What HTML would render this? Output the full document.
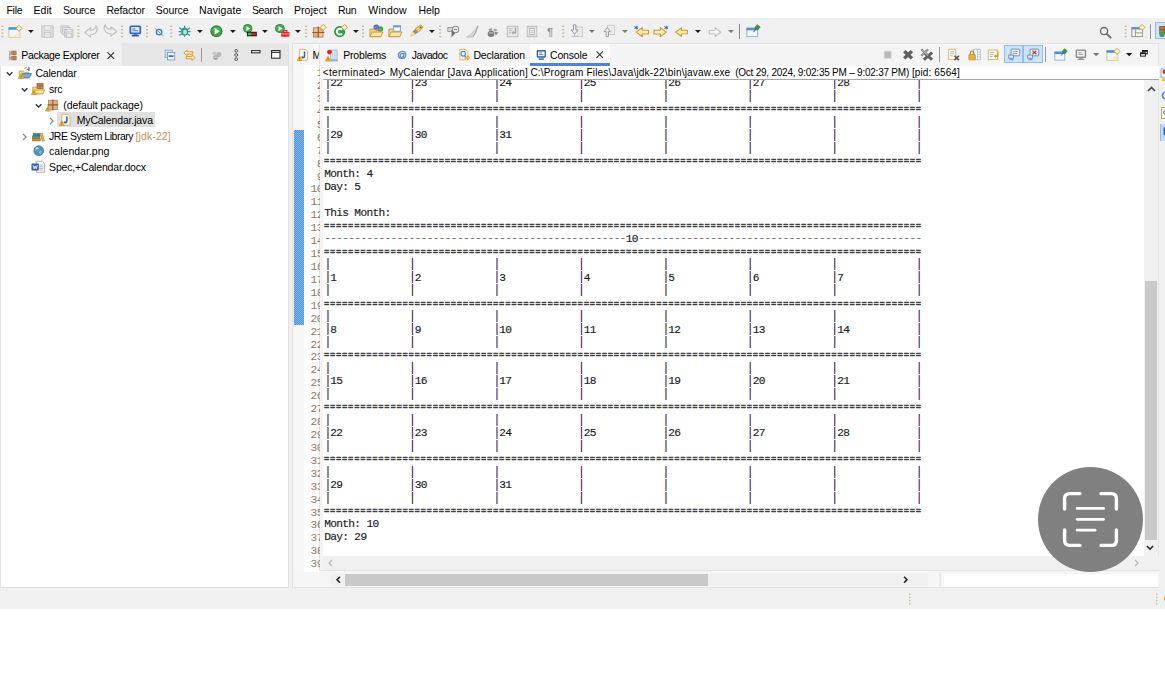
<!DOCTYPE html>
<html lang="en"><head><meta charset="utf-8"><title>Eclipse - MyCalendar Console</title>
<style>
html,body{margin:0;padding:0;}
body{width:1165px;height:692px;position:relative;overflow:hidden;background:#fff;font-family:"Liberation Sans", sans-serif;}
.r{position:absolute;}
.t{position:absolute;white-space:pre;line-height:14px;height:14px;}
.i{position:absolute;overflow:visible;}
#con{position:absolute;left:322.5px;top:80.1px;width:822px;height:475.6px;overflow:hidden;}
#con pre{margin:0;position:absolute;left:1.7px;top:-3.0px;font-family:"Liberation Mono", monospace;font-size:11.2px;line-height:12.967px;color:#1a1a1a;letter-spacing:-0.6811px;-webkit-text-stroke:0.15px #1a1a1a;}
#con b{position:relative;top:-1.0px;line-height:0;font-size:8px;letter-spacing:1.239px;color:#3d3d3d;-webkit-text-stroke:0.6px #3d3d3d;}
#con i{font-style:normal;-webkit-text-stroke:0;color:#34103f;font-size:12.3px;letter-spacing:-1.341px;line-height:0;position:relative;top:-0.4px;}
#con u{position:relative;top:-0.6px;text-decoration:none;color:#686868;-webkit-text-stroke:0;}
#ln{position:absolute;left:304px;top:65px;width:15.5px;height:506.5px;overflow:hidden;}
#ln pre{margin:0;position:absolute;right:-3.2px;top:2.2px;text-align:right;font-family:"Liberation Mono", monospace;font-size:11.2px;letter-spacing:-0.681px;line-height:12.927px;color:#8a786a;}
</style></head><body>
<div class="r" style="left:0px;top:0px;width:1165px;height:17.5px;background:#fff;"></div>
<div class="r" style="left:0px;top:17.5px;width:1165px;height:26px;background:#f0f0f0;"></div>
<div class="r" style="left:0px;top:43.5px;width:1165px;height:565px;background:#f0f0f0;"></div>
<div class="r" style="left:0px;top:43px;width:288.5px;height:22.8px;background:#e6e6e6;"></div>
<div class="r" style="left:0px;top:43px;width:122.3px;height:22.8px;background:#f1f1f1;"></div>
<div class="r" style="left:0px;top:65.8px;width:288.5px;height:521.2px;background:#fff;"></div>
<div class="r" style="left:288px;top:43.5px;width:1px;height:543.5px;background:#e0e0e0;"></div>
<div class="r" style="left:0px;top:586.5px;width:289px;height:1px;background:#e0e0e0;"></div>
<div class="r" style="left:0px;top:65.8px;width:1px;height:521px;background:#e2e2e2;"></div>
<div class="r" style="left:293px;top:43.5px;width:866px;height:543.5px;background:#f5f5f5;box-shadow:0 0 0 1px #e2e2e2;"></div>
<div class="r" style="left:293.5px;top:65px;width:10.5px;height:506.5px;background:#f7f7f7;"></div>
<div class="r" style="left:304px;top:65px;width:16px;height:506.5px;background:#fff;"></div>
<div class="r" style="left:293.5px;top:130px;width:10.5px;height:195px;background:#5a9ee0;background-image:repeating-conic-gradient(#4f97dd 0 25%, #7db5ea 0 50%);background-size:2px 2px;"></div>
<div class="r" style="left:331px;top:573.8px;width:610px;height:12.6px;background:#f0f0f0;"></div>
<div class="r" style="left:345.2px;top:574.3px;width:363px;height:11.4px;background:#c9c9c9;"></div>
<div class="r" style="left:928px;top:573.8px;width:11px;height:13px;background:#f6f6f6;"></div>
<div class="r" style="left:940px;top:573px;width:1px;height:14px;background:#e9e9e9;"></div>
<div class="r" style="left:944.3px;top:573.8px;width:213.5px;height:13px;background:#fff;"></div>
<div class="r" style="left:319.5px;top:43.6px;width:838.3px;height:526.4px;background:#f4f4f4;box-shadow:0 0 0 1px #e4e4e4;"></div>
<div class="r" style="left:530px;top:43.9px;width:80px;height:20px;background:#fff;"></div>
<div class="r" style="left:530px;top:63px;width:80px;height:2.6px;background:#4f83dc;"></div>
<div class="r" style="left:322.5px;top:65.6px;width:836px;height:13px;background:#fff;"></div>
<div class="r" style="left:322.5px;top:78.5px;width:836px;height:1.6px;background:#a6a6a6;"></div>
<div class="r" style="left:322.5px;top:80.1px;width:822px;height:475.6px;background:#fff;"></div>
<div class="r" style="left:1144.3px;top:80.1px;width:14px;height:475.6px;background:#f0f0f0;"></div>
<div class="r" style="left:1144.8px;top:280.6px;width:12.4px;height:259.4px;background:#c9c9c9;"></div>
<div class="r" style="left:322.5px;top:555.7px;width:836px;height:14px;background:#f0f0f0;"></div>
<div class="r" style="left:1159px;top:43.5px;width:6px;height:544px;background:#f1f1f1;"></div>
<div class="r" style="left:1159.6px;top:124px;width:6px;height:16.8px;background:#c4ddf5;box-shadow:inset 1px 0 0 #8fbdee;"></div>
<div class="r" style="left:1154.8px;top:21.7px;width:11px;height:17.6px;background:#cfe4f8;box-shadow:inset 0 0 0 1px #8fbdee;"></div>
<div class="r" style="left:1004px;top:45.2px;width:19.2px;height:18px;background:#cde3f8;box-shadow:inset 0 0 0 1px #8fbdee;"></div>
<div class="r" style="left:1023.2px;top:45.2px;width:19.4px;height:18px;background:#cde3f8;box-shadow:inset 0 0 0 1px #8fbdee;"></div>
<div class="r" style="left:739.2px;top:23.7px;width:1.3px;height:15px;background:#8a8a8a;"></div>
<div class="r" style="left:1150px;top:23.5px;width:1.2px;height:15px;background:#9a9a9a;"></div>
<div class="r" style="left:939.3px;top:47px;width:1.2px;height:14.5px;background:#9a9a9a;"></div>
<div class="r" style="left:1044.8px;top:47px;width:1.2px;height:14.5px;background:#9a9a9a;"></div>
<div class="r" style="left:201.2px;top:47.5px;width:1.2px;height:14px;background:#9a9a9a;"></div>
<div class="r" style="left:57.2px;top:112.4px;width:97.4px;height:15.1px;background:#dfdfdf;"></div>
<div class="r" style="left:0px;top:608.5px;width:1165px;height:83.5px;background:#fff;"></div>
<span class="t" id="t0" style="left:6.40px;top:3.20px;font-size:10.5px;color:#000;letter-spacing:-0.230px;">File</span>
<span class="t" id="t1" style="left:33.40px;top:3.20px;font-size:10.5px;color:#000;letter-spacing:0.073px;">Edit</span>
<span class="t" id="t2" style="left:63.10px;top:3.20px;font-size:10.5px;color:#000;letter-spacing:-0.228px;">Source</span>
<span class="t" id="t3" style="left:106.40px;top:3.20px;font-size:10.5px;color:#000;letter-spacing:-0.148px;">Refactor</span>
<span class="t" id="t4" style="left:155.80px;top:3.20px;font-size:10.5px;color:#000;letter-spacing:-0.113px;">Source</span>
<span class="t" id="t5" style="left:199.10px;top:3.20px;font-size:10.5px;color:#000;letter-spacing:0.106px;">Navigate</span>
<span class="t" id="t6" style="left:252.00px;top:3.20px;font-size:10.5px;color:#000;letter-spacing:-0.413px;">Search</span>
<span class="t" id="t7" style="left:294.10px;top:3.20px;font-size:10.5px;color:#000;letter-spacing:0.002px;">Project</span>
<span class="t" id="t8" style="left:338.10px;top:3.20px;font-size:10.5px;color:#000;letter-spacing:-0.422px;">Run</span>
<span class="t" id="t9" style="left:368.30px;top:3.20px;font-size:10.5px;color:#000;letter-spacing:0.175px;">Window</span>
<span class="t" id="t10" style="left:418.40px;top:3.20px;font-size:10.5px;color:#000;letter-spacing:-0.027px;">Help</span>
<span class="t" id="t11" style="left:21.30px;top:48.30px;font-size:10.5px;color:#000;letter-spacing:-0.299px;">Package Explorer</span>
<span class="t" id="t12" style="left:35.40px;top:66.40px;font-size:10.5px;color:#000;letter-spacing:-0.176px;">Calendar</span>
<span class="t" id="t13" style="left:49.10px;top:81.98px;font-size:10.5px;color:#000;letter-spacing:-0.302px;">src</span>
<span class="t" id="t14" style="left:63.30px;top:97.56px;font-size:10.5px;color:#000;letter-spacing:-0.097px;">(default package)</span>
<span class="t" id="t15" style="left:76.70px;top:113.14px;font-size:10.5px;color:#000;letter-spacing:-0.134px;">MyCalendar.java</span>
<span class="t" id="t16" style="left:49.10px;top:128.72px;font-size:10.5px;color:#000;letter-spacing:-0.493px;">JRE System Library</span>
<span class="t" id="t17" style="left:135.40px;top:128.72px;font-size:10.5px;color:#b09a5e;letter-spacing:0.133px;">[jdk-22]</span>
<span class="t" id="t18" style="left:49.10px;top:144.30px;font-size:10.5px;color:#000;letter-spacing:0.013px;">calendar.png</span>
<span class="t" id="t19" style="left:49.10px;top:159.88px;font-size:10.5px;color:#000;letter-spacing:-0.175px;">Spec,+Calendar.docx</span>
<span class="t" id="t20" style="left:397.20px;top:47.70px;font-size:9.4px;color:#2f72c4;letter-spacing:0.477px;-webkit-text-stroke:0.25px #2f72c4;">@</span>
<span class="t" id="t21" style="left:343.20px;top:47.80px;font-size:10.5px;color:#000;letter-spacing:-0.183px;">Problems</span>
<span class="t" id="t22" style="left:411.80px;top:47.80px;font-size:10.5px;color:#000;letter-spacing:-0.475px;">Javadoc</span>
<span class="t" id="t23" style="left:473.40px;top:47.80px;font-size:10.5px;color:#000;letter-spacing:-0.147px;">Declaration</span>
<span class="t" id="t24" style="left:550.00px;top:47.80px;font-size:10.5px;color:#000;letter-spacing:-0.162px;">Console</span>
<span class="t" id="t25" style="left:322.80px;top:65.50px;font-size:10px;color:#000;letter-spacing:0.322px;">&lt;terminated&gt;</span>
<span class="t" id="t26" style="left:389.70px;top:65.50px;font-size:10px;color:#000;letter-spacing:0.138px;">MyCalendar</span>
<span class="t" id="t27" style="left:447.40px;top:65.50px;font-size:10px;color:#000;letter-spacing:0.153px;">[Java Application]</span>
<span class="t" id="t28" style="left:530.40px;top:65.50px;font-size:10px;color:#000;letter-spacing:0.196px;">C:\Program Files\Java\jdk-22\bin\javaw.exe</span>
<span class="t" id="t29" style="left:735.20px;top:65.50px;font-size:10px;color:#000;letter-spacing:-0.233px;">(Oct 29, 2024, 9:02:35 PM – 9:02:37 PM)</span>
<span class="t" id="t30" style="left:911.90px;top:65.50px;font-size:10px;color:#000;letter-spacing:0.117px;">[pid: 6564]</span>
<svg class="i" style="left:8.40px;top:24.60px" width="14.00" height="13.40" viewBox="0 0 16 16" preserveAspectRatio="none"><rect x="1" y="3.2" width="12.6" height="11.8" fill="#eef7fe" stroke="#d9c27e" stroke-width="1"/><path d="M5 14.5 L13 8 V14.5 Z" fill="#f6ecc4"/><rect x="0.6" y="2.8" width="13.4" height="2.8" fill="#3f8fdc"/><path d="M12.6 0.4 L16 4 L12.6 7.6 L9.2 4 Z" fill="#fbeec0" stroke="#c9a040" stroke-width="1.1" stroke-linejoin="round"/><path d="M10.6 4 H14.6" stroke="#fffbe8" stroke-width="1"/></svg>
<svg class="i" style="left:28.10px;top:29.82px" width="5.80" height="3.36" viewBox="0 0 7 4" preserveAspectRatio="none"><path d="M0 0 H7 L3.5 3.6 Z" fill="#1a1a1a"/></svg>
<svg class="i" style="left:40.80px;top:25.10px" width="13.00" height="13.00" viewBox="0 0 16 16" preserveAspectRatio="none"><path d="M1 1 H15 V15 H1 Z" fill="#dedede" stroke="#c2c2c2"/><rect x="4" y="1" width="8" height="5.5" fill="#ececec" stroke="#c8c8c8" stroke-width="0.8"/><rect x="4.5" y="9.5" width="7" height="5.5" fill="#ececec" stroke="#bdbdbd" stroke-width="0.8"/><path d="M6 12 H10" stroke="#c8c8c8"/></svg>
<svg class="i" style="left:60.20px;top:25.10px" width="13.80" height="13.00" viewBox="0 0 16 16" preserveAspectRatio="none"><path d="M1 1 H10 V10 H1 Z" fill="#e2e2e2" stroke="#c6c6c6"/><path d="M3 3 H12 V12 H3 Z" fill="#e2e2e2" stroke="#c2c2c2"/><path d="M5.5 5.5 H15 V15 H5.5 Z" fill="#dedede" stroke="#bcbcbc"/><rect x="7.5" y="10.5" width="5.5" height="4.5" fill="#eeeeee" stroke="#bdbdbd" stroke-width="0.8"/><rect x="7.5" y="5.5" width="5.5" height="3" fill="#ececec" stroke="#c8c8c8" stroke-width="0.6"/></svg>
<svg class="i" style="left:84.40px;top:24.90px" width="14.40" height="13.00" viewBox="0 0 16 16" preserveAspectRatio="none"><path d="M0.8 9.2 L7.2 3.4 V6.6 C10.5 6.6 12.8 4.4 13.6 0.8 C16.2 6 13.6 12 7.2 12 V15 Z" fill="#eeeeee" stroke="#c4c4c4" stroke-width="1.4" stroke-linejoin="round"/></svg>
<svg class="i" style="left:103.20px;top:24.00px" width="14.40" height="13.00" viewBox="0 0 16 16" preserveAspectRatio="none"><path d="M0.8 9.2 L7.2 3.4 V6.6 C10.5 6.6 12.8 4.4 13.6 0.8 C16.2 6 13.6 12 7.2 12 V15 Z" fill="#eeeeee" stroke="#c4c4c4" stroke-width="1.4" stroke-linejoin="round" transform="translate(16,0) scale(-1,1)"/></svg>
<svg class="i" style="left:129.00px;top:25.00px" width="12.60" height="12.00" viewBox="0 0 16 16" preserveAspectRatio="none"><rect x="0.6" y="0.6" width="14.8" height="11.6" rx="2" fill="#3568bd"/><rect x="2.8" y="2.8" width="10.4" height="7.2" fill="#e4eefb"/><path d="M4.4 5.4 H8.4 M4.4 7.6 H11.4" stroke="#4a7fc9" stroke-width="1.3"/><path d="M5.5 12.2 H10.5 V13.4 H12.6 V15.2 H3.4 V13.4 H5.5 Z" fill="#2f5fb0"/></svg>
<svg class="i" style="left:154.40px;top:26.60px" width="10.20" height="10.00" viewBox="0 0 16 16" preserveAspectRatio="none"><circle cx="8" cy="8.2" r="4.3" fill="#d6e8f8" stroke="#2f7fc6" stroke-width="2"/><path d="M1 1.8 L15.5 14.8" stroke="#8a8f98" stroke-width="1.5"/></svg>
<svg class="i" style="left:178.00px;top:25.45px" width="13.20" height="12.50" viewBox="0 0 16 16" preserveAspectRatio="none"><path d="M8 1 V15 M1.5 3.5 L14.5 13.5 M14.5 3.5 L1.5 13.5 M0.8 8.5 H15.2" stroke="#2f8fa0" stroke-width="1.5"/><ellipse cx="8" cy="8.5" rx="4.3" ry="5.2" fill="#379a9a"/><ellipse cx="8.4" cy="9" rx="2.4" ry="3" fill="#bfe6b4"/></svg>
<svg class="i" style="left:197.10px;top:29.82px" width="5.80" height="3.36" viewBox="0 0 7 4" preserveAspectRatio="none"><path d="M0 0 H7 L3.5 3.6 Z" fill="#1a1a1a"/></svg>
<svg class="i" style="left:210.40px;top:24.70px" width="12.80" height="12.60" viewBox="0 0 16 16" preserveAspectRatio="none"><circle cx="8" cy="8" r="7.6" fill="#2a8632"/><circle cx="8" cy="8" r="6.2" fill="#3fa34b"/><path d="M2.5 6 A6 6 0 0 1 13.5 6 Z" fill="#5cb866" opacity="0.7"/><path d="M5.8 3.8 L12.3 8 L5.8 12.2 Z" fill="#fff"/></svg>
<svg class="i" style="left:229.70px;top:29.82px" width="5.80" height="3.36" viewBox="0 0 7 4" preserveAspectRatio="none"><path d="M0 0 H7 L3.5 3.6 Z" fill="#1a1a1a"/></svg>
<svg class="i" style="left:242.50px;top:24.15px" width="13.80" height="13.50" viewBox="0 0 16 16" preserveAspectRatio="none"><circle cx="5.5" cy="5.4" r="5.4" fill="#2f9240"/><circle cx="5.5" cy="5.4" r="4.2" fill="#46a955"/><path d="M3.9 2.6 L8.4 5.4 L3.9 8.2 Z" fill="#fff"/><rect x="4.6" y="9.2" width="11.4" height="5.4" fill="#161616"/><rect x="5.7" y="10.3" width="4.4" height="3.2" fill="#2fc23f"/><rect x="10.3" y="10.3" width="4.6" height="3.2" fill="#e81c1c"/></svg>
<svg class="i" style="left:262.30px;top:29.82px" width="5.80" height="3.36" viewBox="0 0 7 4" preserveAspectRatio="none"><path d="M0 0 H7 L3.5 3.6 Z" fill="#1a1a1a"/></svg>
<svg class="i" style="left:275.20px;top:24.15px" width="14.40" height="13.50" viewBox="0 0 16 16" preserveAspectRatio="none"><circle cx="5.5" cy="5.4" r="5.4" fill="#2f9240"/><circle cx="5.5" cy="5.4" r="4.2" fill="#46a955"/><path d="M3.9 2.6 L8.4 5.4 L3.9 8.2 Z" fill="#fff"/><rect x="6.8" y="9.2" width="9.2" height="6" rx="1" fill="#e3262b"/><path d="M9.6 9.2 V7.8 H13.2 V9.2" stroke="#e3262b" stroke-width="1.3" fill="none"/><path d="M6.8 11.8 H16" stroke="#f9c0c0" stroke-width="0.9"/></svg>
<svg class="i" style="left:295.30px;top:29.82px" width="5.80" height="3.36" viewBox="0 0 7 4" preserveAspectRatio="none"><path d="M0 0 H7 L3.5 3.6 Z" fill="#1a1a1a"/></svg>
<svg class="i" style="left:312.00px;top:24.45px" width="14.20" height="13.50" viewBox="0 0 16 16" preserveAspectRatio="none"><rect x="1.5" y="4.5" width="11" height="11" fill="#ddb086" stroke="#b07a4c" stroke-width="0.9"/><path d="M7 3 V16 M0.3 10 H14" stroke="#94592f" stroke-width="1.3"/><rect x="2.6" y="5.6" width="3.4" height="3.4" fill="#ecc9a4"/><rect x="8.2" y="11.2" width="3.4" height="3.4" fill="#ecc9a4"/><path d="M12.6 0.4 L16 4 L12.6 7.6 L9.2 4 Z" fill="#fbeec0" stroke="#c9a040" stroke-width="1.1" stroke-linejoin="round"/><path d="M10.6 4 H14.6" stroke="#fffbe8" stroke-width="1"/></svg>
<svg class="i" style="left:333.60px;top:24.45px" width="13.40" height="13.50" viewBox="0 0 16 16" preserveAspectRatio="none"><circle cx="6.8" cy="9" r="6.6" fill="#2a8f3e"/><circle cx="6.8" cy="9" r="5.4" fill="#3aa24e"/><path d="M9.6 6.8 A3.5 3.5 0 1 0 9.6 11.4" stroke="#fff" stroke-width="2.3" fill="none"/><path d="M12.6 0.4 L16 4 L12.6 7.6 L9.2 4 Z" fill="#fbeec0" stroke="#c9a040" stroke-width="1.1" stroke-linejoin="round"/><path d="M10.6 4 H14.6" stroke="#fffbe8" stroke-width="1"/></svg>
<svg class="i" style="left:352.60px;top:29.82px" width="5.80" height="3.36" viewBox="0 0 7 4" preserveAspectRatio="none"><path d="M0 0 H7 L3.5 3.6 Z" fill="#1a1a1a"/></svg>
<svg class="i" style="left:368.50px;top:24.15px" width="14.50" height="13.50" viewBox="0 0 16 16" preserveAspectRatio="none"><path d="M1 6 H6 L7.5 7.5 H13 V15 H1 Z" fill="#f3d48b" stroke="#c8922e" stroke-width="1"/><path d="M1 15 L3.5 9.5 H15.5 L13 15 Z" fill="#fbe6a8" stroke="#c8922e" stroke-width="1" stroke-linejoin="round"/><circle cx="8" cy="3.6" r="3.1" fill="#6a5bb5"/><path d="M6.3 3.8 H9.7" stroke="#b9b0e6" stroke-width="0.9"/><circle cx="12.6" cy="5.8" r="3" fill="#3c9a55"/><path d="M11 6 H14.2" stroke="#a9dcb6" stroke-width="0.9"/></svg>
<svg class="i" style="left:388.00px;top:24.15px" width="14.40" height="13.50" viewBox="0 0 16 16" preserveAspectRatio="none"><path d="M1 6 H6 L7.5 7.5 H13 V15 H1 Z" fill="#f3d48b" stroke="#c8922e" stroke-width="1"/><path d="M1 15 L3.5 9.5 H15.5 L13 15 Z" fill="#fbe6a8" stroke="#c8922e" stroke-width="1" stroke-linejoin="round"/><rect x="6" y="2" width="8" height="6.5" fill="#f4f8ff" stroke="#7c9fd6" stroke-width="1"/><rect x="6" y="2" width="8" height="2" fill="#6d97d8"/></svg>
<svg class="i" style="left:409.00px;top:24.15px" width="15.00" height="13.50" viewBox="0 0 16 16" preserveAspectRatio="none"><path d="M1.5 14.5 L4 9 L7 12 Z" fill="#fff2a8" stroke="#e8b93a" stroke-width="0.8"/><path d="M4 9 L7 12 L10 9.5 L6.5 6 Z" fill="#8e8e96"/><path d="M6.5 6 L10 9.5 L15 4 L12.5 1 Z" fill="#f2c868" stroke="#c9922e" stroke-width="0.9"/><circle cx="12.3" cy="4" r="1.1" fill="#7a5a1a"/></svg>
<svg class="i" style="left:429.30px;top:29.82px" width="5.80" height="3.36" viewBox="0 0 7 4" preserveAspectRatio="none"><path d="M0 0 H7 L3.5 3.6 Z" fill="#1a1a1a"/></svg>
<svg class="i" style="left:446.50px;top:24.70px" width="13.00" height="13.00" viewBox="0 0 16 16" preserveAspectRatio="none"><rect x="1" y="3" width="7" height="5" fill="#d6d6d6" stroke="#8e8e8e"/><circle cx="10.5" cy="5.5" r="4" fill="#ececec" stroke="#8a8a8a" stroke-width="1.3"/><path d="M8.5 5.5 H12.5" stroke="#808080" stroke-width="1.2"/><path d="M5.5 6 V15.5 L10 10 Z" fill="#707070"/></svg>
<svg class="i" style="left:466.00px;top:24.70px" width="13.20" height="13.00" viewBox="0 0 16 16" preserveAspectRatio="none"><path d="M1 14.5 H8 C11 12 13 7 14.5 1 C11 6 7 11 1 14.5 Z" fill="#d9d9d9" stroke="#c0c0c0" stroke-width="0.9"/><path d="M8.5 14 C11 11 13 6 14.5 1" stroke="#a8a8a8" stroke-width="1.3" fill="none"/><path d="M0.5 15 H9" stroke="#c6c6c6"/></svg>
<svg class="i" style="left:487.00px;top:27.15px" width="11.80" height="10.50" viewBox="0 0 16 16" preserveAspectRatio="none"><circle cx="5.5" cy="10.5" r="4.6" fill="#7c7c7c"/><circle cx="5" cy="4" r="2.2" fill="#9a9a9a"/><circle cx="11" cy="4.5" r="2.4" fill="#a8a8a8"/><path d="M10 7.5 L15.5 8 L12 13 Z" fill="#8a8a8a"/><path d="M2.5 9 H8.5" stroke="#e6e6e6" stroke-width="1.1"/></svg>
<svg class="i" style="left:505.80px;top:24.70px" width="13.20" height="13.00" viewBox="0 0 16 16" preserveAspectRatio="none"><rect x="1.5" y="1.5" width="13" height="13" fill="#e9e9e9" stroke="#b2b2b2"/><path d="M3.5 4.5 H8 M3.5 7 H7 M3.5 9.5 H6" stroke="#b3b3b3"/><path d="M11.5 3 V9.5 H8.5" stroke="#a8a8a8" stroke-width="1.8" fill="none"/><path d="M9.5 7 L6.5 9.5 L9.5 12 Z" fill="#a8a8a8"/></svg>
<svg class="i" style="left:526.00px;top:24.70px" width="12.00" height="13.00" viewBox="0 0 16 16" preserveAspectRatio="none"><rect x="1.5" y="1.5" width="13" height="13" fill="#e9e9e9" stroke="#b2b2b2"/><rect x="5" y="4.5" width="6" height="7" fill="#f8f8f8" stroke="#a8a8a8"/><path d="M3 3.5 H13 M3 12.5 H13" stroke="#bdbdbd" stroke-dasharray="1 1"/><path d="M6 7 H10 M6 9 H10" stroke="#b0b0b0"/></svg>
<svg class="i" style="left:570.00px;top:24.45px" width="13.50" height="13.50" viewBox="0 0 16 16" preserveAspectRatio="none"><rect x="5.5" y="3.5" width="9" height="11" fill="#f0f0f0" stroke="#c2c2c2"/><path d="M8 6.5 H13 M8 9 H13 M8 11.5 H13" stroke="#cfcfcf" stroke-dasharray="1.2 1"/><path d="M4 1 H7 V7 H9.5 L5.5 12 L1.5 7 H4 Z" fill="#ededed" stroke="#8e8e8e" stroke-width="1"/><path d="M1.5 14.5 H9.5" stroke="#b5b5b5"/></svg>
<svg class="i" style="left:589.40px;top:29.82px" width="5.80" height="3.36" viewBox="0 0 7 4" preserveAspectRatio="none"><path d="M0 0 H7 L3.5 3.6 Z" fill="#7a7a7a"/></svg>
<svg class="i" style="left:603.00px;top:24.45px" width="12.50" height="13.50" viewBox="0 0 16 16" preserveAspectRatio="none"><rect x="5.5" y="1.5" width="9" height="11" fill="#f0f0f0" stroke="#c2c2c2"/><path d="M8 4.5 H13 M8 7 H13 M8 9.5 H13" stroke="#cfcfcf" stroke-dasharray="1.2 1"/><path d="M4 15 H7 V9 H9.5 L5.5 4 L1.5 9 H4 Z" fill="#ededed" stroke="#8e8e8e" stroke-width="1"/></svg>
<svg class="i" style="left:622.30px;top:29.82px" width="5.80" height="3.36" viewBox="0 0 7 4" preserveAspectRatio="none"><path d="M0 0 H7 L3.5 3.6 Z" fill="#7a7a7a"/></svg>
<svg class="i" style="left:634.00px;top:25.20px" width="14.50" height="12.00" viewBox="0 0 16 16" preserveAspectRatio="none"><path d="M1 8.5 L7.5 2.5 V6 H14.5 V11 H7.5 V14.5 Z" fill="#fdefb8" stroke="#d0952a" stroke-width="1.3" stroke-linejoin="round" transform="translate(1.5,1)"/><path d="M2.5 1 V6 M0.5 2.2 L4.5 4.8 M4.5 2.2 L0.5 4.8" stroke="#2d5fa8" stroke-width="1.1"/></svg>
<svg class="i" style="left:653.80px;top:25.20px" width="14.50" height="12.00" viewBox="0 0 16 16" preserveAspectRatio="none"><path d="M15 8.5 L8.5 2.5 V6 H1.5 V11 H8.5 V14.5 Z" fill="#fdefb8" stroke="#d0952a" stroke-width="1.3" stroke-linejoin="round" transform="translate(-1.5,1)"/><path d="M13.5 1 V6 M11.5 2.2 L15.5 4.8 M15.5 2.2 L11.5 4.8" stroke="#2d5fa8" stroke-width="1.1"/></svg>
<svg class="i" style="left:674.60px;top:25.75px" width="13.60" height="11.50" viewBox="0 0 16 16" preserveAspectRatio="none"><path d="M1 8.5 L7.5 2.5 V6 H14.5 V11 H7.5 V14.5 Z" fill="#fdefb8" stroke="#d0952a" stroke-width="1.3" stroke-linejoin="round"/></svg>
<svg class="i" style="left:695.10px;top:29.82px" width="5.80" height="3.36" viewBox="0 0 7 4" preserveAspectRatio="none"><path d="M0 0 H7 L3.5 3.6 Z" fill="#1a1a1a"/></svg>
<svg class="i" style="left:708.00px;top:25.75px" width="13.60" height="11.50" viewBox="0 0 16 16" preserveAspectRatio="none"><path d="M15 8.5 L8.5 2.5 V6 H1.5 V11 H8.5 V14.5 Z" fill="#f4f4f4" stroke="#b9b9b9" stroke-width="1.2" stroke-linejoin="round"/></svg>
<svg class="i" style="left:727.70px;top:29.82px" width="5.80" height="3.36" viewBox="0 0 7 4" preserveAspectRatio="none"><path d="M0 0 H7 L3.5 3.6 Z" fill="#7a7a7a"/></svg>
<svg class="i" style="left:746.00px;top:23.95px" width="14.30" height="13.50" viewBox="0 0 16 16" preserveAspectRatio="none"><rect x="1" y="5" width="12" height="10" fill="#f4f9ff" stroke="#8fb0dc" stroke-width="1.1"/><rect x="0.5" y="4.5" width="13" height="3" fill="#4f8edc"/><path d="M8.5 9.5 L11.5 5.5" stroke="#5a6a7a" stroke-width="1.2"/><path d="M9.8 4.2 L12.6 0.8 L16 3.6 L13.2 7 Z" fill="#2e9a44" stroke="#1f7a33" stroke-width="0.6" stroke-linejoin="round"/></svg>
<svg class="i" style="left:1099.00px;top:25.95px" width="12.50" height="12.50" viewBox="0 0 16 16" preserveAspectRatio="none"><circle cx="6.5" cy="6.5" r="4.6" fill="none" stroke="#6a6a6a" stroke-width="1.7"/><path d="M10 10 L15 15" stroke="#6a6a6a" stroke-width="2.3" stroke-linecap="round"/></svg>
<svg class="i" style="left:1131.00px;top:24.45px" width="14.00" height="13.50" viewBox="0 0 16 16" preserveAspectRatio="none"><rect x="1" y="4" width="12" height="11" fill="#fbf6e3" stroke="#8a8a8a" stroke-width="1"/><rect x="1" y="4" width="12" height="2.5" fill="#5b8fd6"/><path d="M5 6.5 V15 M5 10.5 H13" stroke="#8a8a8a" stroke-width="1"/><path d="M12.6 0.4 L16 4 L12.6 7.6 L9.2 4 Z" fill="#fbeec0" stroke="#c9a040" stroke-width="1.1" stroke-linejoin="round"/><path d="M10.6 4 H14.6" stroke="#fffbe8" stroke-width="1"/></svg>
<svg class="i" style="left:1158.50px;top:24.65px" width="12.00" height="12.50" viewBox="0 0 16 16" preserveAspectRatio="none"><rect x="1" y="2" width="12" height="9" fill="#b9814f" stroke="#7d4a2a"/><path d="M1 6 H13 M7 2 V11" stroke="#7d4a2a"/><circle cx="4" cy="12" r="3.5" fill="#3fa05a"/></svg>
<svg class="i" style="left:7.50px;top:49.80px" width="10.00" height="11.00" viewBox="0 0 16 16" preserveAspectRatio="none"><path d="M3 1 V15" stroke="#6b6b6b" stroke-width="1.2"/><path d="M3 4.5 H6 M3 11.5 H6" stroke="#6b6b6b" stroke-width="1"/><rect x="6" y="1.5" width="7" height="5.5" fill="#c98a5a" stroke="#8f5a34" stroke-width="0.8"/><rect x="6" y="9" width="7" height="5.5" fill="#c98a5a" stroke="#8f5a34" stroke-width="0.8"/><path d="M9.5 1.5 V7 M9.5 9 V14.5" stroke="#8f5a34" stroke-width="0.8"/></svg>
<svg class="i" style="left:106.40px;top:51.30px" width="9.60" height="9.40" viewBox="0 0 16 16" preserveAspectRatio="none"><path d="M2.5 2.5 L13.5 13.5 M13.5 2.5 L2.5 13.5" stroke="#333" stroke-width="1.9"/></svg>
<svg class="i" style="left:164.30px;top:49.30px" width="11.90" height="12.00" viewBox="0 0 16 16" preserveAspectRatio="none"><rect x="1.5" y="1.5" width="10" height="10" fill="#cfdcee" stroke="#8aa4cf"/><rect x="4.5" y="4.5" width="10" height="10" fill="#eef4fc" stroke="#6c8fc6"/><path d="M6.3 9.5 H12.7" stroke="#2d5fa8" stroke-width="2.2"/></svg>
<svg class="i" style="left:182.60px;top:49.05px" width="13.20" height="12.50" viewBox="0 0 16 16" preserveAspectRatio="none"><path d="M1 5 L5 1.5 V3.5 H12 V6.5 H5 V8.5 Z" fill="#fdf0c0" stroke="#d0952a" stroke-width="1.1" stroke-linejoin="round"/><path d="M15 11 L11 7.5 V9.5 H4 V12.5 H11 V14.5 Z" fill="#fdf0c0" stroke="#d0952a" stroke-width="1.1" stroke-linejoin="round"/></svg>
<svg class="i" style="left:210.60px;top:49.80px" width="11.60" height="11.00" viewBox="0 0 16 16" preserveAspectRatio="none"><circle cx="5" cy="5" r="3" fill="#c9c9c9"/><circle cx="11" cy="6.5" r="3.5" fill="#b8b8b8"/><circle cx="6.5" cy="11" r="3.5" fill="#a9a9a9"/><path d="M4 10.5 H9" stroke="#e8e8e8"/></svg>
<svg class="i" style="left:234.20px;top:49.10px" width="4.40" height="12.00" viewBox="0 0 4.4 13" preserveAspectRatio="none"><circle cx="2.2" cy="2" r="1.450" fill="#fff" stroke="#3a3a3a" stroke-width="0.9"/><circle cx="2.2" cy="6.5" r="1.450" fill="#fff" stroke="#3a3a3a" stroke-width="0.9"/><circle cx="2.2" cy="11" r="1.450" fill="#fff" stroke="#3a3a3a" stroke-width="0.9"/></svg>
<svg class="i" style="left:250.80px;top:50.40px" width="9.60" height="3.40" viewBox="0 0 10 3.5" preserveAspectRatio="none"><rect x="0.6" y="0.6" width="8.8" height="2.3" fill="#fff" stroke="#2a2a2a" stroke-width="1.1"/></svg>
<svg class="i" style="left:270.80px;top:50.30px" width="9.60" height="8.80" viewBox="0 0 9.5 9" preserveAspectRatio="none"><rect x="0.6" y="0.6" width="8.3" height="7.8" fill="#fff" stroke="#2a2a2a" stroke-width="1.1"/><path d="M0.6 2.4 H8.9" stroke="#2a2a2a" stroke-width="1.1"/></svg>
<svg class="i" style="left:6.40px;top:71.40px" width="7.20" height="5.20" viewBox="0 0 9 6.5" preserveAspectRatio="none"><path d="M1 1.5 L4.5 5 L8 1.5" fill="none" stroke="#333" stroke-width="1.7"/></svg>
<svg class="i" style="left:17.50px;top:66.15px" width="14.00" height="13.50" viewBox="0 0 16 16" preserveAspectRatio="none"><path d="M1.5 6 H6 L7.5 7.5 H12 V14 H1.5 Z" fill="#f3d48b" stroke="#c8922e" stroke-width="0.9"/><path d="M3 14 L5 9 H15.5 L13 14 Z" fill="#7ea6e0" stroke="#3f6fb5" stroke-width="0.9" stroke-linejoin="round"/><path d="M12.5 1 V6 M10.5 4 H12.5" stroke="#3f6fb5" stroke-width="1.3" fill="none"/><path d="M7 3 L10 1.5" stroke="#c8922e"/><path d="M3.5 9.5 l2.7 5 h-5.4 z" fill="#f7cb55" stroke="#e0a832" stroke-width="1.6" stroke-linejoin="round"/><path d="M3.5 11.2 v2.2 M3.5 14.2 v0.8" stroke="#8a5a10" stroke-width="0.9"/></svg>
<svg class="i" style="left:20.60px;top:86.98px" width="7.20" height="5.20" viewBox="0 0 9 6.5" preserveAspectRatio="none"><path d="M1 1.5 L4.5 5 L8 1.5" fill="none" stroke="#333" stroke-width="1.7"/></svg>
<svg class="i" style="left:31.40px;top:81.73px" width="13.80" height="13.50" viewBox="0 0 16 16" preserveAspectRatio="none"><path d="M2 6 H6 L7.5 7.5 H14 V14 H2 Z" fill="#f3d48b" stroke="#c8922e" stroke-width="0.9"/><path d="M2 14 L4.5 9.5 H16 L13.5 14 Z" fill="#fbe6a8" stroke="#c8922e" stroke-width="0.9" stroke-linejoin="round"/><rect x="7" y="1.5" width="7" height="6" fill="#c98a5a" stroke="#8f5a34" stroke-width="0.8"/><path d="M10.5 1.5 V7.5 M7 4.5 H14" stroke="#8f5a34" stroke-width="0.8"/><path d="M3.5 9.5 l2.7 5 h-5.4 z" fill="#f7cb55" stroke="#e0a832" stroke-width="1.6" stroke-linejoin="round"/><path d="M3.5 11.2 v2.2 M3.5 14.2 v0.8" stroke="#8a5a10" stroke-width="0.9"/></svg>
<svg class="i" style="left:34.60px;top:102.56px" width="7.20" height="5.20" viewBox="0 0 9 6.5" preserveAspectRatio="none"><path d="M1 1.5 L4.5 5 L8 1.5" fill="none" stroke="#333" stroke-width="1.7"/></svg>
<svg class="i" style="left:45.00px;top:99.06px" width="13.60" height="13.00" viewBox="0 0 16 16" preserveAspectRatio="none"><rect x="4" y="1.5" width="10.5" height="11.5" fill="#ddb086" stroke="#b07a4c" stroke-width="0.9"/><path d="M9.2 0.5 V14 M3 7.2 H15.5" stroke="#94592f" stroke-width="1.4"/><path d="M3.5 9.5 l2.7 5 h-5.4 z" fill="#f7cb55" stroke="#e0a832" stroke-width="1.6" stroke-linejoin="round"/><path d="M3.5 11.2 v2.2 M3.5 14.2 v0.8" stroke="#8a5a10" stroke-width="0.9"/></svg>
<svg class="i" style="left:49.20px;top:116.94px" width="5.20" height="8.00" viewBox="0 0 6 9" preserveAspectRatio="none"><path d="M1.2 1 L4.7 4.5 L1.2 8" fill="none" stroke="#858585" stroke-width="1.4"/></svg>
<svg class="i" style="left:59.20px;top:113.09px" width="12.60" height="13.50" viewBox="0 0 16 16" preserveAspectRatio="none"><path d="M3.5 1.5 H11 L14 4.5 V14.5 H3.5 Z" fill="#fffdf2" stroke="#c9ab57" stroke-width="1"/><path d="M10 4 V9.5 C10 12 7 12 6.5 10" fill="none" stroke="#2f5fae" stroke-width="2"/><path d="M3.5 9.5 l2.7 5 h-5.4 z" fill="#f7cb55" stroke="#e0a832" stroke-width="1.6" stroke-linejoin="round"/><path d="M3.5 11.2 v2.2 M3.5 14.2 v0.8" stroke="#8a5a10" stroke-width="0.9"/></svg>
<svg class="i" style="left:21.60px;top:132.52px" width="5.20" height="8.00" viewBox="0 0 6 9" preserveAspectRatio="none"><path d="M1.2 1 L4.7 4.5 L1.2 8" fill="none" stroke="#858585" stroke-width="1.4"/></svg>
<svg class="i" style="left:31.80px;top:132.62px" width="12.80" height="8.40" viewBox="0 0 16 10" preserveAspectRatio="none"><rect x="1.5" y="0.5" width="8.5" height="3" fill="#3d7fc4" stroke="#2a5d96" stroke-width="0.6"/><rect x="0.5" y="3.5" width="9.5" height="3" fill="#4aa35a" stroke="#2f7a3c" stroke-width="0.6"/><rect x="0.5" y="6.5" width="10" height="3" fill="#d9823c" stroke="#a85a1e" stroke-width="0.6"/><path d="M10.3 1 L12.8 0.3 L15.6 9.3 L13 9.8 Z" fill="#eeb040" stroke="#b07a18" stroke-width="0.7"/></svg>
<svg class="i" style="left:33.00px;top:145.35px" width="11.50" height="11.50" viewBox="0 0 16 16" preserveAspectRatio="none"><circle cx="8" cy="8" r="6.8" fill="#4f8fd8" stroke="#2f5f9e" stroke-width="0.9"/><path d="M4 4 C6 2.5 8 3.5 7.5 5.5 C7 7.5 4 7 3.5 9 C2.5 8 2.5 5.5 4 4 Z M9 8 C11 7 13 8.5 12.5 10.5 C12 12.5 10 13.5 9 12 C8 10.5 8 9 9 8 Z" fill="#7fc56b"/><ellipse cx="6" cy="4.5" rx="2.5" ry="1.5" fill="#cfe4fa" opacity="0.7"/></svg>
<svg class="i" style="left:31.00px;top:159.83px" width="14.00" height="13.50" viewBox="0 0 16 16" preserveAspectRatio="none"><path d="M6 1.5 H13 L15.5 4 V14.5 H6 Z" fill="#fff" stroke="#9a9a9a" stroke-width="0.9"/><path d="M9.5 6 H14 M9.5 8 H14 M9.5 10 H14 M9.5 12 H14" stroke="#9a9a9a" stroke-width="0.8"/><rect x="0.5" y="4" width="8.5" height="8.5" rx="0.8" fill="#2b5fb4"/><path d="M2.3 6 L3.5 10.5 L4.750 7 L6 10.5 L7.2 6" fill="none" stroke="#fff" stroke-width="1"/></svg>
<svg class="i" style="left:296.80px;top:48.25px" width="12.00" height="13.50" viewBox="0 0 16 16" preserveAspectRatio="none"><path d="M3.5 1.5 H11 L14 4.5 V14.5 H3.5 Z" fill="#fffdf2" stroke="#c9ab57" stroke-width="1"/><path d="M10 4 V9.5 C10 12 7 12 6.5 10" fill="none" stroke="#2f5fae" stroke-width="2"/><path d="M3.5 9.5 l2.7 5 h-5.4 z" fill="#f7cb55" stroke="#e0a832" stroke-width="1.6" stroke-linejoin="round"/><path d="M3.5 11.2 v2.2 M3.5 14.2 v0.8" stroke="#8a5a10" stroke-width="0.9"/></svg>
<svg class="i" style="left:325.40px;top:48.50px" width="13.80" height="13.00" viewBox="0 0 16 16" preserveAspectRatio="none"><path d="M6.5 1.5 H14 V13 H6.5 Z" fill="#e3ecf9" stroke="#8aa4cf" stroke-width="0.9"/><path d="M9 3 V13 M11.5 3 V13" stroke="#a9bfe2" stroke-width="0.9"/><path d="M5 14.5 H15" stroke="#8a8a8a" stroke-width="1.2"/><circle cx="5.2" cy="3.8" r="2.9" fill="#e3262b"/><path d="M3.5 9.5 l2.7 5 h-5.4 z" fill="#f7cb55" stroke="#e0a832" stroke-width="1.6" stroke-linejoin="round"/><path d="M3.5 11.2 v2.2 M3.5 14.2 v0.8" stroke="#8a5a10" stroke-width="0.9"/></svg>
<svg class="i" style="left:457.60px;top:48.30px" width="12.00" height="13.00" viewBox="0 0 16 16" preserveAspectRatio="none"><path d="M2.5 1.5 H10 L13 4.5 V14.5 H2.5 Z" fill="#fffdf2" stroke="#c9ab57" stroke-width="1"/><circle cx="7" cy="7" r="3" fill="#eaf1fb" stroke="#4a7fc9" stroke-width="1.4"/><path d="M9 9.5 L11 12" stroke="#4a7fc9" stroke-width="1.6"/><path d="M9 11 H13 V9.5 L16 12 L13 14.5 V13 H9 Z" fill="#f6c84c" stroke="#c8901e" stroke-width="0.6"/></svg>
<svg class="i" style="left:536.00px;top:49.25px" width="10.60" height="11.50" viewBox="0 0 16 16" preserveAspectRatio="none"><rect x="1" y="1.5" width="14" height="10.5" rx="1.5" fill="#2f62b3"/><rect x="3" y="3.5" width="10" height="6.5" fill="#eef4fd"/><path d="M4.5 5.5 H9 M4.5 7.8 H11" stroke="#5a5a5a" stroke-width="1"/><rect x="4" y="13" width="8" height="2" fill="#2f62b3"/></svg>
<svg class="i" style="left:594.60px;top:50.40px" width="9.40" height="9.40" viewBox="0 0 16 16" preserveAspectRatio="none"><path d="M2.5 2.5 L13.5 13.5 M13.5 2.5 L2.5 13.5" stroke="#333" stroke-width="1.9"/></svg>
<svg class="i" style="left:883.00px;top:49.90px" width="9.40" height="9.40" viewBox="0 0 16 16" preserveAspectRatio="none"><rect x="2" y="2" width="12" height="12" fill="#b9b9b9" stroke="#d6d6d6" stroke-width="1.5"/></svg>
<svg class="i" style="left:901.80px;top:48.85px" width="12.20" height="11.50" viewBox="0 0 16 16" preserveAspectRatio="none"><path d="M3 3 L13 13 M13 3 L3 13" stroke="#5e5e5e" stroke-width="4.6"/></svg>
<svg class="i" style="left:920.40px;top:47.90px" width="13.80" height="13.00" viewBox="0 0 16 16" preserveAspectRatio="none"><path d="M4.5 5.5 L14 14.5 M14 5.5 L4.5 14.5" stroke="#5e5e5e" stroke-width="3.6"/><path d="M1.5 1.5 L9.5 9.5 M9.5 1.5 L1.5 9.5" stroke="#858585" stroke-width="2.6"/><path d="M2 2 L9 9 M9 2 L2 9" stroke="#d9d9d9" stroke-width="0.6"/></svg>
<svg class="i" style="left:947.40px;top:48.10px" width="13.20" height="13.00" viewBox="0 0 16 16" preserveAspectRatio="none"><path d="M2 1.5 H10.5 V14 H2 Z" fill="#fffdf2" stroke="#c9ab57" stroke-width="1"/><path d="M4 4.5 H8.5 M4 7 H8.5 M4 9.5 H7" stroke="#7f9ccb" stroke-width="0.9"/><path d="M9 9.5 L14.5 15 M14.5 9.5 L9 15" stroke="#555" stroke-width="2"/></svg>
<svg class="i" style="left:967.50px;top:48.10px" width="13.10" height="13.00" viewBox="0 0 16 16" preserveAspectRatio="none"><rect x="6.5" y="1.5" width="8.5" height="13" fill="#fffdf2" stroke="#9ab0d2" stroke-width="0.9"/><path d="M11.5 2 V14" stroke="#9ab0d2"/><path d="M13 5 H14 M13 8 H14 M13 11 H14" stroke="#4a7fc9"/><rect x="1" y="8" width="8" height="6.5" rx="0.8" fill="#e8b03c" stroke="#a87818" stroke-width="0.7"/><path d="M2.8 8 V6 A2.2 2.2 0 0 1 7.2 6 V8" fill="none" stroke="#a87818" stroke-width="1.3"/></svg>
<svg class="i" style="left:987.30px;top:48.10px" width="13.10" height="13.00" viewBox="0 0 16 16" preserveAspectRatio="none"><rect x="1.5" y="2.5" width="11.5" height="11.5" fill="#fffdf2" stroke="#c9ab57" stroke-width="1"/><path d="M3.5 5.5 H9 M3.5 8 H8 M3.5 10.5 H7" stroke="#7f9ccb" stroke-width="0.9"/><path d="M13 4 V10 H10.5" stroke="#d9a532" stroke-width="2" fill="none"/><path d="M11 7.5 L8 10 L11 12.5 Z" fill="#d9a532"/></svg>
<svg class="i" style="left:1007.50px;top:48.35px" width="12.50" height="12.50" viewBox="0 0 16 16" preserveAspectRatio="none"><rect x="4" y="1.5" width="11" height="8.5" rx="1" fill="#fff" stroke="#4a6fa8" stroke-width="1"/><path d="M6 4.5 H13 M6 7 H12" stroke="#4a6fa8" stroke-width="0.9"/><rect x="1" y="9" width="6" height="4" fill="#dfe9f7" stroke="#4a6fa8" stroke-width="0.9"/><path d="M2 15 H7" stroke="#4a6fa8"/></svg>
<svg class="i" style="left:1026.80px;top:48.35px" width="12.50" height="12.50" viewBox="0 0 16 16" preserveAspectRatio="none"><rect x="4" y="1.5" width="11" height="8.5" rx="1" fill="#fff" stroke="#4a6fa8" stroke-width="1"/><path d="M7 3.5 L12 8 M12 3.5 L7 8" stroke="#e02b2b" stroke-width="1.7"/><rect x="1" y="9" width="6" height="4" fill="#dfe9f7" stroke="#4a6fa8" stroke-width="0.9"/><path d="M2 15 H7" stroke="#4a6fa8"/></svg>
<svg class="i" style="left:1054.30px;top:47.60px" width="13.30" height="13.00" viewBox="0 0 16 16" preserveAspectRatio="none"><rect x="1" y="5" width="12" height="10" fill="#f4f9ff" stroke="#8fb0dc" stroke-width="1.1"/><rect x="0.5" y="4.5" width="13" height="3" fill="#4f8edc"/><path d="M8.5 9.5 L11.5 5.5" stroke="#5a6a7a" stroke-width="1.2"/><path d="M9.8 4.2 L12.6 0.8 L16 3.6 L13.2 7 Z" fill="#2e9a44" stroke="#1f7a33" stroke-width="0.6" stroke-linejoin="round"/></svg>
<svg class="i" style="left:1075.20px;top:48.50px" width="11.80" height="11.60" viewBox="0 0 16 16" preserveAspectRatio="none"><rect x="0.8" y="0.6" width="14.4" height="11.8" rx="1.8" fill="#8e8e8e"/><rect x="2.8" y="2.6" width="10.4" height="7.8" fill="#f2f2f2"/><path d="M4.4 5.2 H9 M4.4 7.4 H11.4" stroke="#9a9a9a" stroke-width="1.2"/><path d="M5.5 12.4 H10.5 V13.6 H12.6 V15.2 H3.4 V13.6 H5.5 Z" fill="#9a9a9a"/></svg>
<svg class="i" style="left:1093.00px;top:53.34px" width="6.40" height="3.71" viewBox="0 0 7 4" preserveAspectRatio="none"><path d="M0 0 H7 L3.5 3.6 Z" fill="#7a7a7a"/></svg>
<svg class="i" style="left:1106.40px;top:47.70px" width="14.00" height="13.40" viewBox="0 0 16 16" preserveAspectRatio="none"><rect x="1" y="3.2" width="12.6" height="11.8" fill="#eef7fe" stroke="#d9c27e" stroke-width="1"/><path d="M5 14.5 L13 8 V14.5 Z" fill="#f6ecc4"/><rect x="0.6" y="2.8" width="13.4" height="2.8" fill="#3f8fdc"/><path d="M12.6 0.4 L16 4 L12.6 7.6 L9.2 4 Z" fill="#fbeec0" stroke="#c9a040" stroke-width="1.1" stroke-linejoin="round"/><path d="M10.6 4 H14.6" stroke="#fffbe8" stroke-width="1"/></svg>
<svg class="i" style="left:1125.80px;top:53.34px" width="6.40" height="3.71" viewBox="0 0 7 4" preserveAspectRatio="none"><path d="M0 0 H7 L3.5 3.6 Z" fill="#1a1a1a"/></svg>
<svg class="i" style="left:1140.20px;top:49.90px" width="7.80" height="6.60" viewBox="0 0 10 8" preserveAspectRatio="none"><rect x="3" y="0.6" width="6.4" height="4" fill="#fff" stroke="#1a1a1a" stroke-width="1.2"/><path d="M3 1.5 H9.4" stroke="#1a1a1a" stroke-width="1.6"/><rect x="0.6" y="3.4" width="6.4" height="4" fill="#fff" stroke="#1a1a1a" stroke-width="1.2"/><path d="M0.6 4.3 H7" stroke="#1a1a1a" stroke-width="1.6"/></svg>
<svg class="i" style="left:1160.50px;top:68.50px" width="6.00" height="13.00" viewBox="0 0 6 14" preserveAspectRatio="none"><rect x="0" y="0" width="8" height="9" fill="#f3f3f3" stroke="#9ab0d2"/><circle cx="4" cy="3" r="2.5" fill="#e02b2b"/><path d="M0 13 l3 -5 l3 5 z" fill="#f6c84c"/></svg>
<svg class="i" style="left:1161.50px;top:91.10px" width="6.00" height="9.00" viewBox="0 0 6 12" preserveAspectRatio="none"><circle cx="5.5" cy="6" r="5" fill="none" stroke="#4a86cf" stroke-width="1.8"/></svg>
<svg class="i" style="left:1161.00px;top:107.00px" width="6.00" height="12.00" viewBox="0 0 6 13" preserveAspectRatio="none"><rect x="0.5" y="0.5" width="9" height="12" fill="#fffdf2" stroke="#c9ab57"/><circle cx="5" cy="6" r="2.5" fill="#cfe0f7" stroke="#4a7fc9"/></svg>
<svg class="i" style="left:1161.50px;top:127.00px" width="6.00" height="11.00" viewBox="0 0 6 12" preserveAspectRatio="none"><rect x="1.5" y="0" width="10" height="9" rx="1" fill="#2f62b3"/></svg>
<div class="r" style="left:312px;top:47.8px;width:7.3px;height:14px;overflow:hidden"><span class="t" style="left:0.4px;top:0;font-size:10.5px;letter-spacing:-0.13px">MyCalendar.java</span></div>
<div id="ln"><pre>1
2
3
4
5
6
7
8
9
10
11
12
13
14
15
16
17
18
19
20
21
22
23
24
25
26
27
28
29
30
31
32
33
34
35
36
37
38
39</pre></div>
<div id="con"><pre><i>|</i>22           <i>|</i>23           <i>|</i>24           <i>|</i>25           <i>|</i>26           <i>|</i>27           <i>|</i>28           <i>|</i>
<i>|</i>             <i>|</i>             <i>|</i>             <i>|</i>             <i>|</i>             <i>|</i>             <i>|</i>             <i>|</i>
<b>===================================================================================================</b>
<i>|</i>             <i>|</i>             <i>|</i>             <i>|</i>             <i>|</i>             <i>|</i>             <i>|</i>             <i>|</i>
<i>|</i>29           <i>|</i>30           <i>|</i>31           <i>|</i>             <i>|</i>             <i>|</i>             <i>|</i>             <i>|</i>
<i>|</i>             <i>|</i>             <i>|</i>             <i>|</i>             <i>|</i>             <i>|</i>             <i>|</i>             <i>|</i>
<b>===================================================================================================</b>
Month: 4
Day: 5

This Month:
<b>===================================================================================================</b>
<u>--------------------------------------------------</u>10<u>-----------------------------------------------</u>
<b>===================================================================================================</b>
<i>|</i>             <i>|</i>             <i>|</i>             <i>|</i>             <i>|</i>             <i>|</i>             <i>|</i>             <i>|</i>
<i>|</i>1            <i>|</i>2            <i>|</i>3            <i>|</i>4            <i>|</i>5            <i>|</i>6            <i>|</i>7            <i>|</i>
<i>|</i>             <i>|</i>             <i>|</i>             <i>|</i>             <i>|</i>             <i>|</i>             <i>|</i>             <i>|</i>
<b>===================================================================================================</b>
<i>|</i>             <i>|</i>             <i>|</i>             <i>|</i>             <i>|</i>             <i>|</i>             <i>|</i>             <i>|</i>
<i>|</i>8            <i>|</i>9            <i>|</i>10           <i>|</i>11           <i>|</i>12           <i>|</i>13           <i>|</i>14           <i>|</i>
<i>|</i>             <i>|</i>             <i>|</i>             <i>|</i>             <i>|</i>             <i>|</i>             <i>|</i>             <i>|</i>
<b>===================================================================================================</b>
<i>|</i>             <i>|</i>             <i>|</i>             <i>|</i>             <i>|</i>             <i>|</i>             <i>|</i>             <i>|</i>
<i>|</i>15           <i>|</i>16           <i>|</i>17           <i>|</i>18           <i>|</i>19           <i>|</i>20           <i>|</i>21           <i>|</i>
<i>|</i>             <i>|</i>             <i>|</i>             <i>|</i>             <i>|</i>             <i>|</i>             <i>|</i>             <i>|</i>
<b>===================================================================================================</b>
<i>|</i>             <i>|</i>             <i>|</i>             <i>|</i>             <i>|</i>             <i>|</i>             <i>|</i>             <i>|</i>
<i>|</i>22           <i>|</i>23           <i>|</i>24           <i>|</i>25           <i>|</i>26           <i>|</i>27           <i>|</i>28           <i>|</i>
<i>|</i>             <i>|</i>             <i>|</i>             <i>|</i>             <i>|</i>             <i>|</i>             <i>|</i>             <i>|</i>
<b>===================================================================================================</b>
<i>|</i>             <i>|</i>             <i>|</i>             <i>|</i>             <i>|</i>             <i>|</i>             <i>|</i>             <i>|</i>
<i>|</i>29           <i>|</i>30           <i>|</i>31           <i>|</i>             <i>|</i>             <i>|</i>             <i>|</i>             <i>|</i>
<i>|</i>             <i>|</i>             <i>|</i>             <i>|</i>             <i>|</i>             <i>|</i>             <i>|</i>             <i>|</i>
<b>===================================================================================================</b>
Month: 10
Day: 29</pre></div>
<svg class="i" style="left:0;top:17px" width="1165" height="27" viewBox="0 0 1165 27"><g fill="#c9b996"><rect x="1.4" y="8.7" width="2" height="1.3"/><rect x="1.4" y="12.1" width="2" height="1.3"/><rect x="1.4" y="15.5" width="2" height="1.3"/><rect x="1.4" y="18.9" width="2" height="1.3"/><rect x="77.4" y="8.7" width="2" height="1.3"/><rect x="77.4" y="12.1" width="2" height="1.3"/><rect x="77.4" y="15.5" width="2" height="1.3"/><rect x="77.4" y="18.9" width="2" height="1.3"/><rect x="121.0" y="8.7" width="2" height="1.3"/><rect x="121.0" y="12.1" width="2" height="1.3"/><rect x="121.0" y="15.5" width="2" height="1.3"/><rect x="121.0" y="18.9" width="2" height="1.3"/><rect x="146.0" y="8.7" width="2" height="1.3"/><rect x="146.0" y="12.1" width="2" height="1.3"/><rect x="146.0" y="15.5" width="2" height="1.3"/><rect x="146.0" y="18.9" width="2" height="1.3"/><rect x="170.20000000000002" y="8.7" width="2" height="1.3"/><rect x="170.20000000000002" y="12.1" width="2" height="1.3"/><rect x="170.20000000000002" y="15.5" width="2" height="1.3"/><rect x="170.20000000000002" y="18.9" width="2" height="1.3"/><rect x="305.0" y="8.7" width="2" height="1.3"/><rect x="305.0" y="12.1" width="2" height="1.3"/><rect x="305.0" y="15.5" width="2" height="1.3"/><rect x="305.0" y="18.9" width="2" height="1.3"/><rect x="362.0" y="8.7" width="2" height="1.3"/><rect x="362.0" y="12.1" width="2" height="1.3"/><rect x="362.0" y="15.5" width="2" height="1.3"/><rect x="362.0" y="18.9" width="2" height="1.3"/><rect x="439.2" y="8.7" width="2" height="1.3"/><rect x="439.2" y="12.1" width="2" height="1.3"/><rect x="439.2" y="15.5" width="2" height="1.3"/><rect x="439.2" y="18.9" width="2" height="1.3"/><rect x="562.1999999999999" y="8.7" width="2" height="1.3"/><rect x="562.1999999999999" y="12.1" width="2" height="1.3"/><rect x="562.1999999999999" y="15.5" width="2" height="1.3"/><rect x="562.1999999999999" y="18.9" width="2" height="1.3"/><rect x="1124.6000000000001" y="8.7" width="2" height="1.3"/><rect x="1124.6000000000001" y="12.1" width="2" height="1.3"/><rect x="1124.6000000000001" y="15.5" width="2" height="1.3"/><rect x="1124.6000000000001" y="18.9" width="2" height="1.3"/></g></svg>
<span class="t" style="left:547px;top:24.5px;font-size:11px;color:#9a9a9a;font-weight:bold;">¶</span>
<!-- scroll arrows -->
<svg class="i" style="left:1146.500px;top:85.500px" width="9" height="6" viewBox="0 0 9 6"><path d="M1 5 L4.5 1.5 L8 5" fill="none" stroke="#4a4a4a" stroke-width="1.7"/></svg>
<svg class="i" style="left:1146.300px;top:544.800px" width="8" height="5.5" viewBox="0 0 9 6"><path d="M1 1 L4.5 4.5 L8 1" fill="none" stroke="#2a2a2a" stroke-width="1.8"/></svg>
<svg class="i" style="left:328px;top:559px" width="5" height="8" viewBox="0 0 5 8"><path d="M4 0.8 L1 4 L4 7.2" fill="none" stroke="#b5b5b5" stroke-width="1.2"/></svg>
<svg class="i" style="left:1133.500px;top:558.500px" width="5" height="8" viewBox="0 0 5 8"><path d="M1 0.8 L4 4 L1 7.2" fill="none" stroke="#b5b5b5" stroke-width="1.2"/></svg>
<svg class="i" style="left:335.500px;top:576px" width="5" height="7.5" viewBox="0 0 5 8"><path d="M4 0.8 L1 4 L4 7.2" fill="none" stroke="#2a2a2a" stroke-width="1.8"/></svg>
<svg class="i" style="left:903px;top:575.800px" width="5" height="7.5" viewBox="0 0 5 8"><path d="M1 0.8 L4 4 L1 7.2" fill="none" stroke="#2a2a2a" stroke-width="1.8"/></svg>
<!-- status bar handles -->
<svg class="i" style="left:909px;top:592.500px" width="2" height="13" viewBox="0 0 2 13"><g fill="#cdbfa3"><rect y="0.5" width="1.5" height="1.5"/><rect y="3.7" width="1.5" height="1.5"/><rect y="6.9" width="1.5" height="1.5"/><rect y="10.1" width="1.5" height="1.5"/></g></svg>
<svg class="i" style="left:1155.500px;top:592.500px" width="2" height="13" viewBox="0 0 2 13"><g fill="#cdbfa3"><rect y="0.5" width="1.5" height="1.5"/><rect y="3.7" width="1.5" height="1.5"/><rect y="6.9" width="1.5" height="1.5"/><rect y="10.1" width="1.5" height="1.5"/></g></svg>
<div class="r" style="left:1163.500px;top:596px;width:3px;height:6px;background:#e8a33a;border-radius:3px 0 0 3px"></div>
<!-- floating round button -->
<div class="r" style="left:1038px;top:467.300px;width:104.800px;height:104.800px;border-radius:50%;background:#808080;"></div>
<svg class="i" style="left:1060px;top:489px" width="61" height="61" viewBox="0 0 61 61" fill="none" stroke="#fff" stroke-linecap="round">
<g stroke-width="3.4"><path d="M4.6 20 V9.6 Q4.6 4.6 9.6 4.6 H20"/><path d="M41 4.6 H51.4 Q56.4 4.6 56.4 9.6 V20"/><path d="M56.4 41 V51.4 Q56.4 56.4 51.4 56.4 H41"/><path d="M20 56.4 H9.6 Q4.6 56.4 4.6 51.4 V41"/></g>
<g stroke-width="2.8"><path d="M17.2 19.4 H43.6"/><path d="M17.2 30.3 H43.6"/><path d="M17.2 41.2 H35"/></g>
</svg>
</body></html>
